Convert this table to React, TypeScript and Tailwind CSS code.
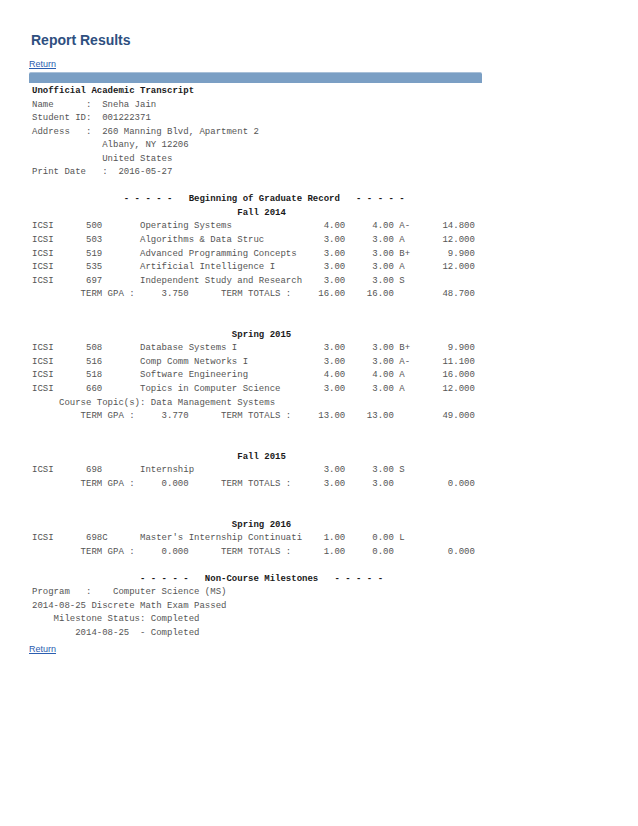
import React from "react";

type Cell = [number, string];

// place text pieces at fixed character columns
function at(cells: Cell[]) {
  let s = "";
  for (const [col, text] of cells) {
    if (s.length < col) s += " ".repeat(col - s.length);
    s += text;
  }
  return s;
}

// right-align text so it ends just before column `end`
const r = (end: number, text: string): Cell => [end - text.length, text];

function course(subj: string, num: string, title: string, units: string, earned: string, grade: string, points: string) {
  const cells: Cell[] = [[0, subj], [10, num], [20, title], r(58, units), r(67, earned)];
  if (grade) cells.push([68, grade]);
  if (points) cells.push(r(82, points));
  return at(cells);
}

function totals(gpa: string, units: string, earned: string, points: string) {
  return at([[9, "TERM GPA :"], [24, gpa], [35, "TERM TOTALS :"], r(58, units), r(67, earned), r(82, points)]);
}

interface Line {
  text: string;
  bold?: boolean;
}

const lines: Line[] = [
  { text: "Unofficial Academic Transcript", bold: true },
  { text: "Name      :  Sneha Jain" },
  { text: "Student ID:  001222371" },
  { text: "Address   :  260 Manning Blvd, Apartment 2" },
  { text: "             Albany, NY 12206" },
  { text: "             United States" },
  { text: "Print Date   :  2016-05-27" },
  { text: "" },
  { text: at([[17, "- - - - -   Beginning of Graduate Record   - - - - -"]]), bold: true },
  { text: at([[38, "Fall 2014"]]), bold: true },
  { text: course("ICSI", "500", "Operating Systems", "4.00", "4.00", "A-", "14.800") },
  { text: course("ICSI", "503", "Algorithms & Data Struc", "3.00", "3.00", "A", "12.000") },
  { text: course("ICSI", "519", "Advanced Programming Concepts", "3.00", "3.00", "B+", "9.900") },
  { text: course("ICSI", "535", "Artificial Intelligence I", "3.00", "3.00", "A", "12.000") },
  { text: course("ICSI", "697", "Independent Study and Research", "3.00", "3.00", "S", "") },
  { text: totals("3.750", "16.00", "16.00", "48.700") },
  { text: "" },
  { text: "" },
  { text: at([[37, "Spring 2015"]]), bold: true },
  { text: course("ICSI", "508", "Database Systems I", "3.00", "3.00", "B+", "9.900") },
  { text: course("ICSI", "516", "Comp Comm Networks I", "3.00", "3.00", "A-", "11.100") },
  { text: course("ICSI", "518", "Software Engineering", "4.00", "4.00", "A", "16.000") },
  { text: course("ICSI", "660", "Topics in Computer Science", "3.00", "3.00", "A", "12.000") },
  { text: at([[5, "Course Topic(s): Data Management Systems"]]) },
  { text: totals("3.770", "13.00", "13.00", "49.000") },
  { text: "" },
  { text: "" },
  { text: at([[38, "Fall 2015"]]), bold: true },
  { text: course("ICSI", "698", "Internship", "3.00", "3.00", "S", "") },
  { text: totals("0.000", "3.00", "3.00", "0.000") },
  { text: "" },
  { text: "" },
  { text: at([[37, "Spring 2016"]]), bold: true },
  { text: course("ICSI", "698C", "Master's Internship Continuati", "1.00", "0.00", "L", "") },
  { text: totals("0.000", "1.00", "0.00", "0.000") },
  { text: "" },
  { text: at([[20, "- - - - -   Non-Course Milestones   - - - - -"]]), bold: true },
  { text: "Program   :    Computer Science (MS)" },
  { text: "2014-08-25 Discrete Math Exam Passed" },
  { text: "    Milestone Status: Completed" },
  { text: "        2014-08-25  - Completed" },
];

function ReturnLink({ className = "" }: { className?: string }) {
  return (
    <a
      href="#"
      className={`block w-fit text-[9px] leading-[10px] text-[#2b5db0] underline font-['Liberation_Sans',Arial,sans-serif] ${className}`}
    >
      Return
    </a>
  );
}

export default function App() {
  return (
    <div className="min-h-[826px] w-[638px] bg-white pl-[29px] pt-[31px]">
      <h1 className="pl-[2px] text-[14px] leading-[18px] font-bold text-[#2e4f7f] font-['Liberation_Sans',Arial,sans-serif]">
        Report Results
      </h1>
      <ReturnLink className="mt-[10px]" />
      <div className="mt-[3px] h-[11px] w-[453px] rounded-t-[2px] border-t border-[#a9c0d8] bg-[#7b9fc4]" />
      <div className="mt-[2px] pl-[3px] font-['Liberation_Mono','Courier_New',monospace] text-[9px] leading-[13.56px] text-[#555555]">
        {lines.map((line, i) => (
          <div
            key={i}
            className={`h-[13.56px] whitespace-pre ${line.bold ? "font-bold text-[#1a1a1a]" : ""}`}
          >
            {line.text}
          </div>
        ))}
      </div>
      <ReturnLink className="mt-[4px]" />
    </div>
  );
}
